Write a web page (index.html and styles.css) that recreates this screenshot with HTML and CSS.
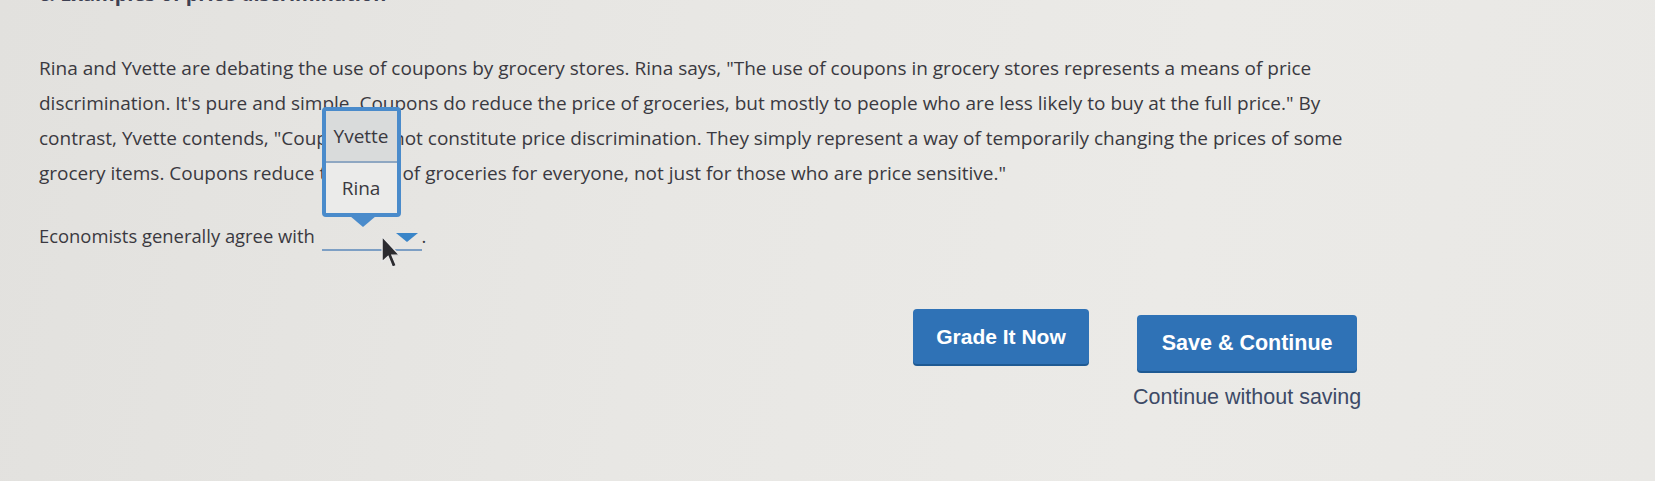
FILE: index.html
```html
<!DOCTYPE html>
<html>
<head>
<meta charset="utf-8">
<link rel="stylesheet" href="styles.css">
</head>
<body>
<div class="page">
  <h2 class="heading">c. Examples of price discrimination</h2>
  <p class="passage">Rina and Yvette are debating the use of coupons by grocery stores. Rina says, "The use of coupons in grocery stores represents a means of price discrimination. It's pure and simple. Coupons do reduce the price of groceries, but mostly to people who are less likely to buy at the full price." By contrast, Yvette contends, "Coupons do not constitute price discrimination. They simply represent a way of temporarily changing the prices of some grocery items. Coupons reduce the price of groceries for everyone, not just for those who are price sensitive."</p>
  <p class="question">Economists generally agree with
    <span class="answer">
      <span class="blank"></span><span class="caret"></span>
      <span class="popup">
        <span class="option selected">Yvette</span>
        <span class="option">Rina</span>
        <span class="pointer"></span>
      </span>
      <svg class="cursor" width="24" height="36" viewBox="0 0 22 32"><path d="M1 1 L1 24 L6.5 19 L10.5 29 L14 27.5 L10 18 L17 18 Z" fill="#2c2c30" stroke="#e8e8e8" stroke-width="1.2"/></svg>
    </span>.
  </p>
  <div class="actions">
    <button class="btn grade">Grade It Now</button>
    <div class="save-col">
      <button class="btn save">Save &amp; Continue</button>
      <span class="link">Continue without saving</span>
    </div>
  </div>
</div>
</body>
</html>
```

FILE: styles.css
```css
html, body {
  margin: 0;
  padding: 0;
}
body {
  width: 1655px;
  height: 481px;
  overflow: hidden;
  background: linear-gradient(100deg, #e2e1de 0%, #e8e7e4 40%, #ebeae7 70%, #e9e8e5 100%);
  font-family: "Open Sans", "Liberation Sans", sans-serif;
  color: #3a3940;
}
.page {
  padding-top: 1px;
  padding-left: 39px;
}
.heading {
  margin: -19px 0 0 0;
  font-size: 20px;
  font-weight: 700;
  color: #3d4052;
  line-height: 24px;
  height: 24px;
}
.passage {
  margin: 45px 0 0 0;
  width: 1310px;
  font-size: 19px;
  line-height: 35px;
}
.question {
  margin: 27px 0 0 0;
  font-size: 18.4px;
  line-height: 35px;
}
.answer {
  position: relative;
  display: inline-block;
  width: 100px;
  height: 20px;
  vertical-align: -8px;
  margin-left: 2px;
}
.blank {
  position: absolute;
  left: 0;
  right: 0;
  bottom: 0;
  border-bottom: 2px solid #7d9fc4;
}
.caret {
  position: absolute;
  right: 4px;
  top: 2px;
  width: 0;
  height: 0;
  border-left: 11px solid transparent;
  border-right: 11px solid transparent;
  border-top: 9px solid #3a85c8;
}
.popup {
  position: absolute;
  left: 0;
  bottom: 34px;
  width: 71px;
  border: 4px solid #4a8bcb;
  border-radius: 4px;
  background: #ebebea;
  display: flex;
  flex-direction: column;
}
.option {
  height: 50px;
  display: flex;
  align-items: center;
  justify-content: center;
  font-size: 19px;
  color: #3a3940;
}
.option.selected {
  background: #d9dbdb;
  border-bottom: 2px solid #8ea7c2;
}
.pointer {
  position: absolute;
  left: 24px;
  bottom: -14px;
  width: 0;
  height: 0;
  border-left: 13px solid transparent;
  border-right: 13px solid transparent;
  border-top: 11px solid #4a8bcb;
}
.cursor {
  position: absolute;
  left: 59px;
  top: 4px;
}
.actions {
  display: flex;
  align-items: flex-start;
  margin: 56px 0 0 874px;
  gap: 44px;
}
.btn {
  border: none;
  border-radius: 4px;
  background: #2f72b6;
  color: #ffffff;
  font-family: "Liberation Sans", Arial, sans-serif;
  font-weight: 700;
  font-size: 21px;
  box-shadow: 0 2px 0 #1f5a93;
  padding: 0;
}
.grade {
  width: 176px;
  height: 55px;
}
.save-col {
  display: flex;
  flex-direction: column;
  align-items: center;
  margin-top: 6px;
}
.save {
  width: 220px;
  height: 56px;
  font-size: 21.5px;
}
.link {
  margin-top: 14px;
  font-family: "Liberation Sans", Arial, sans-serif;
  font-size: 21.5px;
  color: #3d4a66;
  white-space: nowrap;
}
```
